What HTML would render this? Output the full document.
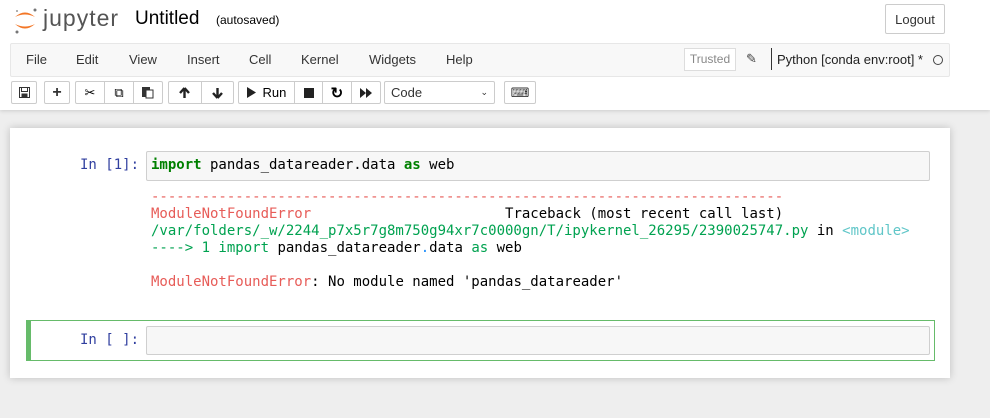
<!DOCTYPE html>
<html><head><style>
body{margin:0;width:990px;height:418px;background:#eee;font-family:"Liberation Sans",sans-serif;font-size:13px;color:#000;position:relative;overflow:hidden}
.a{position:absolute}
.hdr{left:0;top:0;width:990px;height:110px;background:#fff;box-shadow:0 1px 4px rgba(0,0,0,.15)}
.menu{left:10px;top:43px;width:938px;height:32px;background:#f8f8f8;border:1px solid #e7e7e7;border-radius:2px}
.mi{position:absolute;top:9px;font-size:13px;color:#333}
.btn{position:absolute;top:81px;height:23px;border:1px solid #ccc;border-radius:2px;background:#fff;box-sizing:border-box;display:flex;align-items:center;justify-content:center;font-size:13px;color:#333}
.grp{position:absolute;top:81px;height:23px;border:1px solid #ccc;border-radius:2px;background:#fff;box-sizing:border-box;display:flex}
.grp div{border-right:1px solid #ccc;display:flex;align-items:center;justify-content:center;height:100%}
.grp div:last-child{border-right:0}
.nb{left:10px;top:128px;width:940px;height:250px;background:#fff;box-shadow:0 0 8px rgba(0,0,0,.2)}
.mono{font-family:"DejaVu Sans Mono",monospace;font-size:14px;white-space:pre;line-height:17px}
.prompt{color:#303f9f}
.inbox{background:#f7f7f7;border:1px solid #cfcfcf;border-radius:2px;box-sizing:border-box}
.kw{color:#008000;font-weight:bold}
.r{color:#e75c58}.g{color:#00a250}.c{color:#60c6c8}.b{color:#208ffb}
</style></head><body>
<div class="a hdr"></div>
<svg class="a" style="left:13px;top:4px" width="26" height="32" viewBox="0 0 26 32">
<path d="M2 13 Q12 4 22 13 Q12 8 2 13Z" fill="#f37626"/>
<path d="M2 20 Q12 29 22 20 Q12 25 2 20Z" fill="#f37626"/>
<circle cx="22" cy="6" r="1.5" fill="#767677"/><circle cx="4" cy="7" r="1" fill="#989798"/><circle cx="4" cy="28" r="1.5" fill="#767677"/>
</svg>
<div class="a" style="left:43px;top:5px;font-size:23px;color:#555;letter-spacing:1px">jupyter</div>
<div class="a" style="left:135px;top:8px;font-size:19px">Untitled</div>
<div class="a" style="left:216px;top:13px;font-size:12px">(autosaved)</div>
<div class="btn" style="left:885px;top:4px;width:60px;height:30px">Logout</div>
<div class="a menu"></div>
<span class="a mi" style="left:26px;top:52px">File</span>
<span class="a mi" style="left:76px;top:52px">Edit</span>
<span class="a mi" style="left:129px;top:52px">View</span>
<span class="a mi" style="left:187px;top:52px">Insert</span>
<span class="a mi" style="left:249px;top:52px">Cell</span>
<span class="a mi" style="left:301px;top:52px">Kernel</span>
<span class="a mi" style="left:369px;top:52px">Widgets</span>
<span class="a mi" style="left:446px;top:52px">Help</span>
<div class="a" style="left:684px;top:48px;width:50px;height:21px;border:1px solid #ddd;background:#fff;color:#888;font-size:12px;text-align:center;line-height:21px">Trusted</div>
<div class="a" style="left:746px;top:51px;color:#444;font-size:13px">✎</div>
<div class="a" style="left:771px;top:48px;width:1px;height:22px;background:#333"></div>
<div class="a" style="left:777px;top:52px;font-size:13px;color:#222">Python [conda env:root] *</div>
<div class="a" style="left:933px;top:55px;width:8px;height:8px;border:1.5px solid #444;border-radius:50%"></div>
<div class="btn" style="left:11px;width:26px"><svg width="11" height="11" viewBox="0 0 11 11"><rect x="0.5" y="0.5" width="10" height="10" fill="none" stroke="#333"/><rect x="2.5" y="0.5" width="6" height="4" fill="none" stroke="#333"/><rect x="2.5" y="6.5" width="6" height="4" fill="#333"/></svg></div>
<div class="btn" style="left:44px;width:26px;font-weight:bold;font-size:16px">+</div>
<div class="grp" style="left:75px;width:88px"><div style="width:29px">✂</div><div style="width:29px">⧉</div><div style="width:29px"><svg width="12" height="13" viewBox="0 0 12 13"><rect x="0" y="1" width="8" height="10" fill="#333"/><rect x="4" y="4" width="7" height="8" fill="#fff" stroke="#333"/></svg></div></div>
<div class="grp" style="left:168px;width:66px"><div style="width:33px"><svg width="11" height="12" viewBox="0 0 11 12"><path d="M5.5 1L1 6M5.5 1L10 6M5.5 1V11" stroke="#222" stroke-width="2.4" fill="none"/></svg></div><div style="width:33px"><svg width="11" height="12" viewBox="0 0 11 12"><path d="M5.5 11L1 6M5.5 11L10 6M5.5 11V1" stroke="#222" stroke-width="2.4" fill="none"/></svg></div></div>
<div class="grp" style="left:238px;width:143px"><div style="width:56px"><svg width="10" height="11" viewBox="0 0 10 11" style="margin-right:6px"><path d="M1 0L10 5.5L1 11Z" fill="#222"/></svg>Run</div><div style="width:28px"><svg width="10" height="10"><rect width="10" height="10" fill="#222"/></svg></div><div style="width:28px;font-weight:bold;font-size:15px">↻</div><div style="width:29px"><svg width="12" height="10" viewBox="0 0 12 10"><path d="M0 0L6 5L0 10ZM6 0L12 5L6 10Z" fill="#222"/></svg></div></div>
<div class="btn" style="left:384px;width:111px;justify-content:space-between;padding:0 6px"><span>Code</span><span style="font-size:9px">⌄</span></div>
<div class="btn" style="left:504px;width:32px">⌨</div>
<div class="a nb"></div>
<div class="a mono prompt" style="left:80px;top:157px">In [1]:</div>
<div class="a inbox" style="left:146px;top:151px;width:784px;height:30px"></div>
<div class="a mono" style="left:151px;top:157px"><span class="kw">import</span> pandas_datareader.data <span class="kw">as</span> web</div>
<div class="a mono" style="left:151px;top:189px"><span class="r">---------------------------------------------------------------------------</span>
<span class="r">ModuleNotFoundError</span>                       Traceback (most recent call last)
<span class="g">/var/folders/_w/2244_p7x5r7g8m750g94xr7c0000gn/T/ipykernel_26295/2390025747.py</span> in <span class="c">&lt;module&gt;</span>
<span class="g">----&gt; 1 import</span> pandas_datareader<span class="b">.</span>data <span class="g">as</span> web

<span class="r">ModuleNotFoundError</span>: No module named 'pandas_datareader'</div>
<div class="a" style="left:26px;top:320px;width:909px;height:41px;border:1px solid #66bb6a;border-left:5px solid #66bb6a;box-sizing:border-box"></div>
<div class="a mono prompt" style="left:80px;top:332px">In [ ]:</div>
<div class="a inbox" style="left:146px;top:326px;width:784px;height:29px"></div>
</body></html>
